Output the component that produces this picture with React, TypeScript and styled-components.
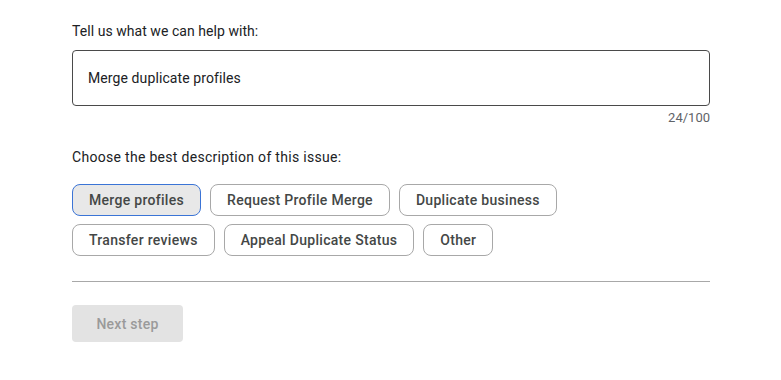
import styled, { createGlobalStyle } from 'styled-components'

const Global = createGlobalStyle`
	html, body {
		margin: 0;
		padding: 0;
		background: #fff;
	}
	body {
		font-family: Roboto, "Noto Sans", Arial, sans-serif;
		color: #202124;
	}
`

const Page = styled.main`
	width: 638px;
	padding: 21px 0 0 72px;
	display: flex;
	flex-direction: column;
`

const Label = styled.div`
	font-size: 14px;
	line-height: 20px;
	color: #202124;
	letter-spacing: 0.05px;
`

const InputBox = styled.div`
	margin-top: 9px;
	height: 56px;
	box-sizing: border-box;
	border: 1px solid #4a4a4a;
	border-radius: 4px;
	padding: 0 15px;
	display: flex;
	align-items: center;
	font-size: 14px;
	color: #202124;
	letter-spacing: 0.1px;
`

const Counter = styled.div`
	margin-top: 4px;
	text-align: right;
	font-size: 13px;
	line-height: 16px;
	color: #5f6368;
`

const Question = styled(Label)`
	margin-top: 21px;
	letter-spacing: 0.3px;
`

const Chips = styled.div`
	margin-top: 17px;
	display: flex;
	flex-wrap: wrap;
	gap: 8px 9px;
	max-width: 500px;
`

const Chip = styled.button<{ $selected?: boolean }>`
	height: 32px;
	box-sizing: border-box;
	padding: 0 16px;
	border-radius: 8px;
	border: 1px solid ${p => (p.$selected ? '#3b74d6' : '#a8a8a8')};
	background: ${p => (p.$selected ? '#e8e8e8' : '#fff')};
	font-family: Roboto, "Noto Sans", Arial, sans-serif;
	font-size: 14px;
	font-weight: 500;
	letter-spacing: 0.3px;
	color: #444746;
	cursor: pointer;
`

const Divider = styled.hr`
	margin: 25px 0 0;
	border: 0;
	border-top: 1px solid #a8a8a8;
`

const NextButton = styled.button`
	margin-top: 23px;
	width: 111px;
	height: 37px;
	border: 0;
	border-radius: 4px;
	background: #e3e3e3;
	color: #9a9a9a;
	font-family: Roboto, "Noto Sans", Arial, sans-serif;
	font-size: 14px;
	font-weight: 500;
	letter-spacing: 0.25px;
`

const options = [
	'Merge profiles',
	'Request Profile Merge',
	'Duplicate business',
	'Transfer reviews',
	'Appeal Duplicate Status',
	'Other',
]

const App = () => (
	<>
		<Global />
		<Page>
			<Label>Tell us what we can help with:</Label>
			<InputBox>Merge duplicate profiles</InputBox>
			<Counter>24/100</Counter>
			<Question>Choose the best description of this issue:</Question>
			<Chips>
				{options.map((o, i) => (
					<Chip key={o} $selected={i === 0}>
						{o}
					</Chip>
				))}
			</Chips>
			<Divider />
			<div>
				<NextButton disabled>Next step</NextButton>
			</div>
		</Page>
	</>
)

export default App
